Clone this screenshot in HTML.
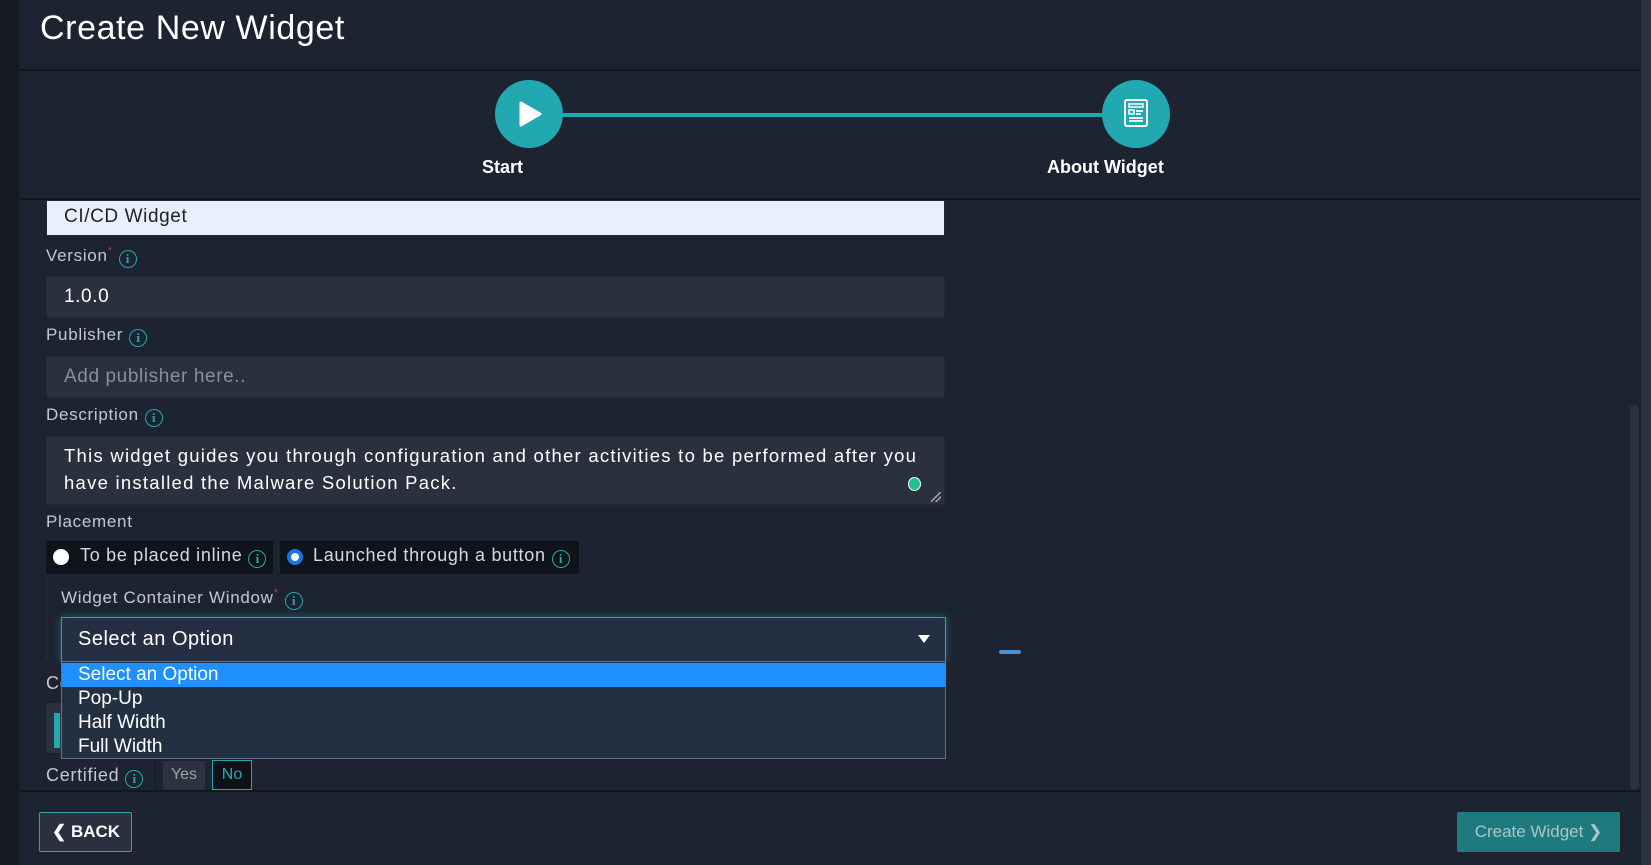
<!DOCTYPE html>
<html><head><meta charset="utf-8"><style>
*{box-sizing:border-box;margin:0;padding:0}
body{width:1651px;height:865px;overflow:hidden;background:#1d2331;font-family:"Liberation Sans",sans-serif;color:#e6e8eb;position:relative}
.abs{position:absolute}
.lbl{position:absolute;font-size:17px;color:#c4c8ce;white-space:nowrap;letter-spacing:0.7px}
.info{display:inline-block;width:18px;height:18px;border:1.5px solid #22a8b0;border-radius:50%;color:#22a8b0;font-size:13px;font-weight:bold;text-align:center;line-height:15px;vertical-align:-2px;margin-left:6px;font-family:"Liberation Serif",serif;letter-spacing:0}
.req{color:#c0392b;font-size:11px;vertical-align:7px}
.inp{position:absolute;left:46px;width:899px;background:#2a303e;border:1px solid #232836;font-size:19px;padding-left:17px;letter-spacing:0.6px}
</style></head><body>
<div class="abs" style="left:0;top:0;width:19px;height:865px;background:#151a21"></div>
<div class="abs" style="left:1641px;top:0;width:10px;height:865px;background:#2b3240"></div>
<div class="abs" style="left:1630px;top:405px;width:9px;height:385px;background:#2b3240;border-radius:4px"></div>
<div class="abs" style="left:40px;top:9px;font-size:34px;color:#fff;letter-spacing:0.6px">Create New Widget</div>
<div class="abs" style="left:19px;top:69px;width:1622px;height:2px;background:#12161d"></div>
<div class="abs" style="left:529px;top:113px;width:607px;height:4px;background:#22a8b0"></div>
<div class="abs" style="left:495px;top:80px;width:68px;height:68px;border-radius:50%;background:#22a8b0"></div>
<svg class="abs" style="left:516px;top:99px" width="28" height="30" viewBox="0 0 28 30"><path d="M5 4 L24 15 L5 26 Z" fill="#fff" stroke="#fff" stroke-width="3" stroke-linejoin="round"/></svg>
<div class="abs" style="left:1102px;top:80px;width:68px;height:68px;border-radius:50%;background:#22a8b0"></div>
<svg class="abs" style="left:1122px;top:98px" width="28" height="30" viewBox="0 0 28 30"><rect x="3" y="2" width="22" height="26" rx="2" fill="none" stroke="#fff" stroke-width="2"/><rect x="7" y="6" width="14" height="3" fill="none" stroke="#fff" stroke-width="1.5"/><rect x="7" y="12" width="5" height="4" fill="none" stroke="#fff" stroke-width="1.5"/><path d="M14 13h7M14 16h5M7 20h14M7 23h14" stroke="#fff" stroke-width="1.8"/></svg>
<div class="abs" style="left:482px;top:157px;font-size:18px;font-weight:bold;color:#fff">Start</div>
<div class="abs" style="left:1047px;top:157px;font-size:18px;font-weight:bold;color:#fff">About Widget</div>
<div class="abs" style="left:19px;top:198px;width:1622px;height:2px;background:#12161d"></div>

<div class="inp" style="top:200px;height:36px;background:#e8f0fe;color:#222;line-height:32px">CI/CD Widget</div>
<div class="lbl" style="left:46px;top:245px">Version<span class="req">*</span><span class="info">i</span></div>
<div class="inp" style="top:276px;height:42px;line-height:40px;color:#fff">1.0.0</div>
<div class="lbl" style="left:46px;top:325px">Publisher<span class="info">i</span></div>
<div class="inp" style="top:356px;height:42px;line-height:40px;color:#8a8f98">Add publisher here..</div>
<div class="lbl" style="left:46px;top:405px">Description<span class="info">i</span></div>
<div class="inp" style="top:436px;height:69px;line-height:27px;padding-top:5px;color:#fff;font-size:18.5px;letter-spacing:1.25px">This widget guides you through configuration and other activities to be performed after you<br>have installed the Malware Solution Pack.</div>
<div class="abs" style="left:908px;top:477px;width:13px;height:14px;border-radius:50%;background:#1fc190;border:1px solid #fff"></div>
<div class="abs" style="left:931px;top:492px;width:10px;height:10px;background:linear-gradient(135deg,transparent 45%,#aaa 45%,#aaa 55%,transparent 55%,transparent 70%,#aaa 70%,#aaa 80%,transparent 80%)"></div>
<div class="lbl" style="left:46px;top:512px">Placement</div>
<div class="abs" style="left:46px;top:541px;width:227px;height:33px;background:#0f131a"></div>
<div class="abs" style="left:53px;top:549px;width:16px;height:16px;border-radius:50%;background:#fff"></div>
<div class="lbl" style="left:80px;top:545px;color:#d6d9dd;font-size:18px">To be placed inline<span class="info">i</span></div>
<div class="abs" style="left:280px;top:541px;width:299px;height:33px;background:#0f131a"></div>
<div class="abs" style="left:287px;top:549px;width:16px;height:16px;border-radius:50%;background:#fff;border:4px solid #1a73e8"></div>
<div class="lbl" style="left:313px;top:545px;color:#d6d9dd;font-size:18px">Launched through a button<span class="info">i</span></div>
<div class="abs" style="left:46px;top:577px;width:1px;height:84px;background:#2a303e"></div>
<div class="lbl" style="left:61px;top:587px">Widget Container Window<span class="req">*</span><span class="info">i</span></div>
<div class="lbl" style="left:46px;top:673px;font-size:18px">Co</div>
<div class="abs" style="left:46px;top:703px;width:20px;height:50px;background:#2a303e"></div>
<div class="abs" style="left:54px;top:713px;width:6px;height:35px;background:#22a8b0"></div>
<div class="abs" style="left:61px;top:617px;width:885px;height:45px;background:#243041;border:1px solid #22a8b0;box-shadow:0 0 8px rgba(34,168,176,.5);font-size:20px;padding-left:16px;line-height:42px;color:#fff;letter-spacing:0.5px">Select an Option</div>
<svg class="abs" style="left:917px;top:634px" width="14" height="10"><path d="M1 1h12L7 9z" fill="#fff"/></svg>
<div class="abs" style="left:61px;top:661px;width:885px;height:98px;background:#223042;border:1px solid #6b7280;font-size:19px;color:#fff">
<div style="height:24px;background:#1e90ff;line-height:24px;padding-left:16px;margin-top:1px">Select an Option</div>
<div style="height:24px;line-height:24px;padding-left:16px">Pop-Up</div>
<div style="height:24px;line-height:24px;padding-left:16px">Half Width</div>
<div style="height:23px;line-height:23px;padding-left:16px">Full Width</div>
</div>
<div class="abs" style="left:999px;top:650px;width:22px;height:4px;border-radius:2px;background:#4a8fd0"></div>
<div class="lbl" style="left:46px;top:765px;font-size:18px">Certified<span class="info">i</span></div>
<div class="abs" style="left:155px;top:760px;width:1px;height:31px;background:#12161d"></div>
<div class="abs" style="left:163px;top:761px;width:42px;height:29px;background:#2d333e;color:#9aa0a8;font-size:16px;text-align:center;line-height:27px">Yes</div>
<div class="abs" style="left:212px;top:760px;width:40px;height:30px;background:#0d1218;border:1px solid #22a8b0;color:#22a8b0;font-size:16px;text-align:center;line-height:28px">No</div>
<div class="abs" style="left:19px;top:790px;width:1622px;height:2px;background:#12161d"></div>
<div class="abs" style="left:39px;top:812px;width:93px;height:40px;background:#2a303e;border:1px solid #22a8b0;border-radius:2px;color:#fff;font-size:17px;line-height:38px;padding-left:12px;font-weight:bold">&#10094; BACK</div>
<div class="abs" style="left:1457px;top:812px;width:163px;height:40px;background:#1f7a80;border-radius:2px;color:#a9c6c8;font-size:17px;line-height:40px;text-align:center">Create Widget &#10095;</div>
</body></html>
